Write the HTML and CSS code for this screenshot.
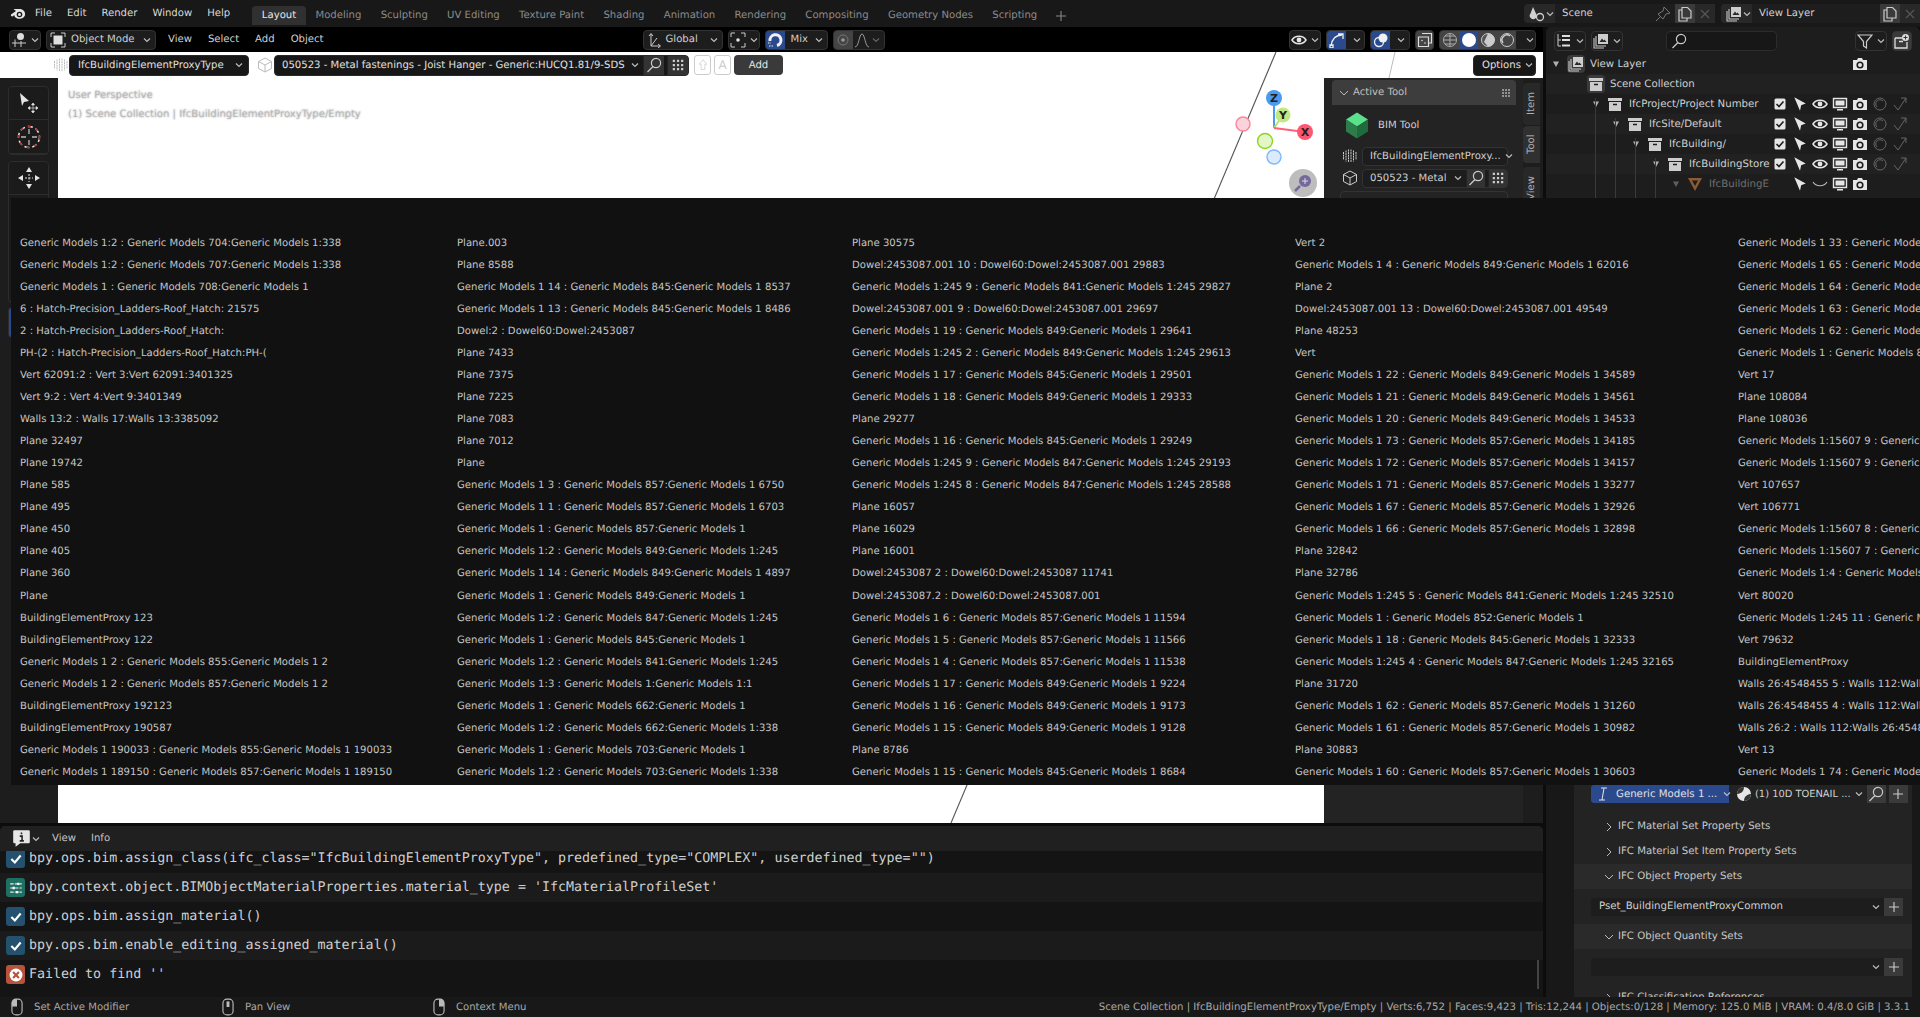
FILE: index.html
```html
<!DOCTYPE html>
<html lang="en">
  <head>
    <meta charset="UTF-8" />
    <title>Blender 3.3.1</title>
    <link rel="stylesheet" href="styles.css">
  </head>
  <body>
    <svg class="defs" width="0" height="0">
      <symbol id="chev" viewBox="0 0 10 10"><path d="M2 3.5 5 6.5 8 3.5" fill="none" stroke="currentColor" stroke-width="1.2"/></symbol>
      <symbol id="chev-r" viewBox="0 0 10 10"><path d="M3 1 7 5 3 9" fill="none" stroke="currentColor"/></symbol>
      <symbol id="chev-d" viewBox="0 0 10 10"><path d="M1 3 5 7 9 3" fill="none" stroke="currentColor"/></symbol>
      <symbol id="tri" viewBox="0 0 10 10"><path d="M2 2.5H8L5 8Z" fill="currentColor"/></symbol>
      <symbol id="search" viewBox="0 0 16 16"><circle cx="10" cy="6" r="4.6" fill="none" stroke="currentColor" stroke-width="1.2"/><path d="M7 9.5 1.5 15" stroke="currentColor" stroke-width="1.2"/></symbol>
      <symbol id="grid" viewBox="0 0 16 16"><path d="M2 2h2.5v2.500H2zM6.800 2h2.500v2.500H6.800zM11.500 2H14v2.500h-2.500zM2 6.800h2.500v2.500H2zM6.800 6.800h2.500v2.500H6.800zM11.500 6.800H14v2.500h-2.500zM2 11.500h2.500V14H2zM6.800 11.500h2.500V14H6.800zM11.500 11.500H14V14h-2.500z" fill="currentColor"/></symbol>
      <symbol id="plus" viewBox="0 0 12 12"><path d="M6 1V11M1 6H11" stroke="currentColor" stroke-width="1.1"/></symbol>
      <symbol id="box" viewBox="0 0 16 16"><path d="M1 2H15V5H1ZM2 6H14V15H2Z" fill="currentColor"/><path d="M6 8.500H10" stroke="#1d1d1d" stroke-width="1.500"/></symbol>
      <symbol id="check" viewBox="0 0 12 12"><rect width="11" height="11" x=".5" y=".5" rx="1.500" fill="#e6e6e6"/><path d="M2.500 6 5 8.500 9.500 3.500" fill="none" stroke="#222" stroke-width="1.700"/></symbol>
      <symbol id="arrow" viewBox="0 0 14 14"><path d="M2 1 12 6.500 8 8 7 13Z" fill="#e6e6e6"/></symbol>
      <symbol id="eye" viewBox="0 0 16 16"><path d="M1 8C4 3 12 3 15 8 12 13 4 13 1 8Z" fill="none" stroke="#e6e6e6" stroke-width="1.500"/><circle cx="8" cy="8" r="2.400" fill="#e6e6e6"/></symbol>
      <symbol id="eye-off" viewBox="0 0 16 16"><path d="M1 6C4 11 12 11 15 6" fill="none" stroke="#bbb" stroke-width="1.100"/></symbol>
      <symbol id="monitor" viewBox="0 0 16 16"><path d="M1.500 2.500H14.500V11.500H1.500Z" fill="none" stroke="#e6e6e6" stroke-width="1.400"/><path d="M3.500 4.500H12.500V9.500H3.500ZM5 13H11V14.500H5Z" fill="#e6e6e6"/></symbol>
      <symbol id="cam" viewBox="0 0 16 16"><path d="M1 4H5L6 2H10L11 4H15V14H1Z" fill="#e6e6e6"/><circle cx="8" cy="9" r="3.600" fill="#1d1d1d"/><circle cx="8" cy="9" r="2" fill="#e6e6e6"/></symbol>
      <symbol id="holdout" viewBox="0 0 16 16"><circle cx="8" cy="8" r="6" fill="none" stroke="#666"/><path d="M5 11A4 4 0 0 1 11 5" fill="none" stroke="#666"/></symbol>
      <symbol id="link" viewBox="0 0 16 16"><path d="M2 9 6 14 14 2M9 2H14V7" fill="none" stroke="#666"/></symbol>
      <symbol id="layer" viewBox="0 0 16 16"><path d="M1 5V15H11M3 3V13H13" fill="none" stroke="currentColor" stroke-width="1.100"/><path d="M5 1H15V11H5Z" fill="currentColor"/><path d="M6.500 9 9 5.500 10.500 7.500 11.500 6.500 13.500 9Z" fill="#282828"/></symbol>
      <symbol id="copy" viewBox="0 0 16 16"><path d="M5 1.500H10.500L14 5V12H5ZM5 4H2V15H10V12" fill="none" stroke="currentColor" stroke-width="1.200"/></symbol>
      <symbol id="close" viewBox="0 0 12 12"><path d="M2 2 10 10M10 2 2 10" stroke="currentColor" stroke-width="1.200"/></symbol>
      <symbol id="cube" viewBox="0 0 16 16"><path d="M8 1 14.500 4.500V11.500L8 15 1.500 11.500V4.500ZM1.500 4.500 8 8 14.500 4.500M8 8V15" fill="none" stroke="currentColor"/></symbol>
      <symbol id="ifc-type" viewBox="0 0 16 16"><path d="M1.500 4V12M4 2.500V13.500M6.500 1.500V14.500M9 1.500V14.500M11.500 2.500V13.500M14 4V12" stroke="currentColor" stroke-width="1" stroke-dasharray="2 .6"/></symbol>
      <symbol id="mouse-l" viewBox="0 0 12 16"><rect x="1.500" y="1" width="9" height="14" rx="3.500" fill="none" stroke="currentColor"/><path d="M1.500 7.500V4.500A3.500 3.500 0 0 1 6 1V7.500Z" fill="currentColor"/></symbol>
      <symbol id="mouse-m" viewBox="0 0 12 16"><rect x="1.500" y="1" width="9" height="14" rx="3.500" fill="none" stroke="currentColor"/><rect x="4.700" y="3" width="2.600" height="5" fill="currentColor"/></symbol>
      <symbol id="mouse-r" viewBox="0 0 12 16"><rect x="1.500" y="1" width="9" height="14" rx="3.500" fill="none" stroke="currentColor"/><path d="M10.500 7.500V4.500A3.500 3.500 0 0 0 6 1V7.500Z" fill="currentColor"/></symbol>
    </svg>

    <header class="topbar">
      <svg class="logo" viewBox="0 0 16 16"><path d="M1 9.500 6 6 3.500 4H9.500C13 4 15.500 6.500 15 10 14.500 13.500 8.500 15 5.500 12.500 4.500 11.500 4.300 10.800 4.300 10L2.500 11.500C1.500 11.500 .500 10.500 1 9.500Z" fill="#e6e6e6"/><circle cx="9.500" cy="9.500" r="2.800" fill="#181818"/><circle cx="9.500" cy="9.500" r="1.500" fill="#e6e6e6"/></svg>
      <nav class="menu">
        <span>File</span><span>Edit</span><span>Render</span><span>Window</span><span>Help</span>
      </nav>
      <nav class="tabs">
        <span class="tab active">Layout</span>
        <span class="tab">Modeling</span>
        <span class="tab">Sculpting</span>
        <span class="tab">UV Editing</span>
        <span class="tab">Texture Paint</span>
        <span class="tab">Shading</span>
        <span class="tab">Animation</span>
        <span class="tab">Rendering</span>
        <span class="tab">Compositing</span>
        <span class="tab">Geometry Nodes</span>
        <span class="tab">Scripting</span>
        <svg class="ic tab-plus"><use href="#plus"/></svg>
      </nav>
      <div class="scene-bar">
        <div class="picker scene">
          <span class="pick-icon">
            <svg class="ic" viewBox="0 0 16 16"><path d="M4 1 7 7.500A3.500 3.500 0 1 1 1.500 7.500Z" fill="#d0d0d0"/><circle cx="11" cy="11" r="3.500" fill="none" stroke="#d0d0d0" stroke-width="1.300"/></svg>
            <svg class="chev"><use href="#chev"/></svg>
          </span>
          <span class="pick-name">Scene</span>
          <svg class="ic pin" viewBox="0 0 16 16"><path d="M9 1 15 7 11 8 8 13 3 8 8 5ZM5 11 1 15" fill="none" stroke="#777"/></svg>
          <span class="pick-btn"><svg class="ic"><use href="#copy"/></svg></span>
          <span class="pick-btn dim"><svg class="ic-s"><use href="#close"/></svg></span>
        </div>
        <div class="picker layer">
          <span class="pick-icon">
            <svg class="ic"><use href="#layer"/></svg>
            <svg class="chev"><use href="#chev"/></svg>
          </span>
          <span class="pick-name">View Layer</span>
          <span class="pick-btn"><svg class="ic"><use href="#copy"/></svg></span>
          <span class="pick-btn dim"><svg class="ic-s"><use href="#close"/></svg></span>
        </div>
      </div>
    </header>

    <main class="workspace">
      <div class="left-col">
        <section class="viewport">
          <div class="vp-header">
            <div class="dd w-editor">
              <svg class="ic" viewBox="0 0 16 16"><path d="M1 11H15M4 7.500V15M10 9V15" stroke="#ccc"/><circle cx="9.500" cy="4.500" r="3.500" fill="#ddd"/></svg>
              <svg class="chev"><use href="#chev"/></svg>
            </div>
            <div class="dd w-mode">
              <svg class="ic" viewBox="0 0 16 16"><path d="M1 5V1H5M11 1H15V5M15 11V15H11M5 15H1V11" fill="none" stroke="#ccc"/><rect x="3.500" y="3.500" width="9" height="9" fill="#e0e0e0"/></svg>
              <span class="dd-text">Object Mode</span>
              <svg class="chev"><use href="#chev"/></svg>
            </div>
            <span class="vp-menu view">View</span>
            <span class="vp-menu">Select</span>
            <span class="vp-menu">Add</span>
            <span class="vp-menu">Object</span>

            <div class="vp-mid">
              <div class="dd w-global">
                <svg class="ic" viewBox="0 0 16 16"><path d="M4 14V2M2 4 4 1.500 6 4M4 14 13 14M11 12 13.500 14 11 16M4 14 10 6" fill="none" stroke="#ccc"/></svg>
                <span class="dd-text">Global</span>
                <svg class="chev"><use href="#chev"/></svg>
              </div>
              <div class="dd w-pivot">
                <svg class="ic" viewBox="0 0 16 16"><path d="M1 5V1H5M11 1H15V5M15 11V15H11M5 15H1V11" fill="none" stroke="#ccc"/><circle cx="8" cy="8" r="1.800" fill="#e6e6e6"/></svg>
                <svg class="chev"><use href="#chev"/></svg>
              </div>
              <div class="dd w-snap">
                <span class="snap-on"><svg class="ic" viewBox="0 0 16 16"><path d="M3 9A5.500 5.500 0 1 1 10 13.500" fill="none" stroke="#f0f0f0" stroke-width="3"/><path d="M1 11H4M2 14H6" stroke="#f0f0f0" stroke-dasharray="1.500 1"/></svg></span>
                <span class="dd-text">Mix</span>
                <svg class="chev"><use href="#chev"/></svg>
              </div>
              <div class="dd w-prop">
                <span class="prop-on"><svg class="ic-s" viewBox="0 0 12 12"><circle cx="6" cy="6" r="5" fill="none" stroke="#777"/><circle cx="6" cy="6" r="1.800" fill="#999"/></svg></span>
                <svg class="ic" viewBox="0 0 16 16"><path d="M1 15C5 15 5 2 8 2S11 15 15 15" fill="none" stroke="#999"/></svg>
                <svg class="chev dim"><use href="#chev"/></svg>
              </div>
            </div>

            <div class="vp-right">
              <div class="dd w-vis">
                <svg class="ic"><use href="#eye"/></svg>
                <svg class="chev"><use href="#chev"/></svg>
              </div>
              <div class="dd w-gizmo">
                <span class="snap-on"><svg class="ic" viewBox="0 0 16 16"><path d="M2 14C3 7 7 3 13 3M9 2H14V7M1 13H4V16H1Z" fill="none" stroke="#f0f0f0" stroke-width="1.300"/></svg></span>
                <svg class="chev mid-chev"><use href="#chev"/></svg>
              </div>
              <div class="dd w-over">
                <span class="snap-on"><svg class="ic" viewBox="0 0 16 16"><circle cx="6" cy="10" r="4.500" fill="none" stroke="#f0f0f0" stroke-width="1.300"/><circle cx="10" cy="6" r="4.500" fill="#f0f0f0"/></svg></span>
                <svg class="chev mid-chev"><use href="#chev"/></svg>
              </div>
              <div class="dd w-xray">
                <svg class="ic" viewBox="0 0 16 16"><path d="M5 1.500H14.500V11H11.500M1.500 5H11.500V14.500H1.500Z" fill="none" stroke="#ddd" stroke-width="1.200"/><circle cx="5" cy="8.500" r=".8" fill="#ddd"/><circle cx="8" cy="11" r=".8" fill="#ddd"/></svg>
              </div>
              <div class="dd w-shade">
                <span class="shade"><svg class="ic" viewBox="0 0 16 16"><circle cx="8" cy="8" r="6.500" fill="none" stroke="#aaa"/><path d="M1.500 8H14.500M8 1.500V14.500M3 4H13M3 12H13" stroke="#aaa"/></svg></span>
                <span class="shade on"><svg class="ic" viewBox="0 0 16 16"><circle cx="8" cy="8" r="7" fill="#fff"/></svg></span>
                <span class="shade"><svg class="ic" viewBox="0 0 16 16"><circle cx="8" cy="8" r="6.500" fill="#555" stroke="#ccc"/><path d="M8 1.500A6.500 6.500 0 0 1 8 14.500L4 10Z" fill="#ccc"/></svg></span>
                <span class="shade"><svg class="ic" viewBox="0 0 16 16"><circle cx="8" cy="8" r="6.500" fill="none" stroke="#ccc"/><path d="M4 11A5 5 0 0 1 11 4" fill="none" stroke="#ccc" stroke-width="1.500"/></svg></span>
                <svg class="chev shade-chev"><use href="#chev"/></svg>
              </div>
            </div>
          </div>

          <svg class="scene-lines" width="1543" height="796">
            <path d="M1276 25 951 796" stroke="#555" stroke-width="1.100"/>
            <path d="M1395 25 1389 51" stroke="#bbb"/>
            <path d="M1274 101V71" stroke="#4a9bf0" stroke-width="2"/>
            <path d="M1274 101 1283 88" stroke="#b8e070" stroke-width="2"/>
            <path d="M1274 101 1305 105" stroke="#ff5f78" stroke-width="2"/>
            <circle cx="1243" cy="97" r="7" fill="#fbd3db" stroke="#ff8299" stroke-width="1.400"/>
            <circle cx="1265" cy="114" r="7.500" fill="#e3f6c8" stroke="#8fd41e" stroke-width="1.400"/>
            <circle cx="1274" cy="130" r="7" fill="#dbeafd" stroke="#7db8f8" stroke-width="1.400"/>
            <circle cx="1274" cy="71" r="8" fill="#4a9bf0"/>
            <circle cx="1283" cy="88" r="7.500" fill="#c2e880"/>
            <circle cx="1305" cy="105" r="8" fill="#ff5570"/>
            <text x="1274" y="75" class="axis">Z</text>
            <text x="1283" y="92" class="axis">Y</text>
            <text x="1305" y="109" class="axis">X</text>
            <circle cx="1303" cy="156" r="14" fill="#bdbdbd"/>
            <circle cx="1305" cy="154" r="6" fill="#75699c"/>
            <path d="M1300 159 1295 164" stroke="#75699c" stroke-width="2.500"/>
            <path d="M1305 151V157M1302 154H1308" stroke="#ddd"/>
          </svg>

          <div class="tool-row">
            <svg class="ic tr-icon"><use href="#ifc-type"/></svg>
            <div class="dd dark w-class">
              <span class="dd-text">IfcBuildingElementProxyType</span>
              <svg class="chev"><use href="#chev"/></svg>
            </div>
            <svg class="ic tr-icon cube"><use href="#cube"/></svg>
            <div class="dd dark w-relating">
              <span class="dd-text">050523 - Metal fastenings - Joist Hanger - Generic:HUCQ1.81/9-SDS</span>
              <svg class="chev"><use href="#chev"/></svg>
              <span class="dd-btn"><svg class="ic"><use href="#search"/></svg></span>
              <span class="dd-btn"><svg class="ic-g"><use href="#grid"/></svg></span>
            </div>
            <span class="ghost"><svg class="ic-s" viewBox="0 0 12 16"><path d="M6 1 11 7H8.500V14H3.500V7H1Z" fill="none" stroke="#ccc"/></svg></span>
            <span class="ghost letter">A</span>
            <span class="add">Add</span>
            <div class="dd dark w-options">
              <span class="dd-text">Options</span>
              <svg class="chev"><use href="#chev"/></svg>
            </div>
          </div>

          <div class="vp-body">
            <aside class="toolbar">
              <div class="tool-group">
                <div class="tool">
                  <svg class="tool-ic" viewBox="0 0 24 24"><path d="M3 2 12 10 7 11 5 15Z" fill="#e6e6e6"/><path d="M16 12V22M11 17H21M16 12 14.500 14H17.500ZM16 22 14.500 20H17.500ZM11 17 13 15.500V18.500ZM21 17 19 15.500V18.500Z" fill="#e6e6e6" stroke="#e6e6e6" stroke-width=".6"/></svg>
                </div>
                <div class="tool">
                  <svg class="tool-ic" viewBox="0 0 24 24"><circle cx="12" cy="12" r="10.500" fill="none" stroke="#e6e6e6" stroke-width="1.500" stroke-dasharray="5 3"/><circle cx="12" cy="12" r="10.500" fill="none" stroke="#b03030" stroke-width="1.500" stroke-dasharray="3 5"/><path d="M12 4V9M12 15V20M4 12H9M15 12H20" stroke="#bbb" stroke-width="1.300"/></svg>
                </div>
              </div>
              <div class="tool-group">
                <div class="tool">
                  <svg class="tool-ic" viewBox="0 0 24 24"><path d="M12 1 15 6H9ZM12 23 9 18H15ZM1 12 6 9V15ZM23 12 18 15V9Z" fill="#e6e6e6"/><path d="M12 8V16M8 12H16" stroke="#e6e6e6" stroke-dasharray="2 1.500"/></svg>
                </div>
                <div class="tool tall"></div>
              </div>
              <div class="tool-group active-tool"></div>
            </aside>
            <div class="canvas">
              <p class="overlay-text">User Perspective</p>
              <p class="overlay-text">(1) Scene Collection | IfcBuildingElementProxyType/Empty</p>
            </div>
            <aside class="sidebar">
              <div class="side-panel">
                <div class="panel-head">
                  <svg class="chev"><use href="#chev-d"/></svg>
                  <span>Active Tool</span>
                  <svg class="ic-s handle"><use href="#grid"/></svg>
                </div>
                <div class="tool-name">
                  <svg class="bim-cube" viewBox="0 0 24 28"><path d="M12 1 23 8 12 15 1 8Z" fill="#5ae18c"/><path d="M1 8 12 15V27L1 20Z" fill="#2d7d4a"/><path d="M23 8 12 15V27L23 20Z" fill="#1f6b3c"/></svg>
                  <span>BIM Tool</span>
                </div>
                <div class="side-row">
                  <svg class="ic"><use href="#ifc-type"/></svg>
                  <div class="dd fill">
                    <span class="dd-text">IfcBuildingElementProxy...</span>
                    <svg class="chev"><use href="#chev"/></svg>
                  </div>
                </div>
                <div class="side-row">
                  <svg class="ic"><use href="#cube"/></svg>
                  <div class="dd fill">
                    <span class="dd-text">050523 - Metal</span>
                    <svg class="chev"><use href="#chev"/></svg>
                    <span class="dd-btn"><svg class="ic"><use href="#search"/></svg></span>
                    <span class="dd-btn"><svg class="ic-g"><use href="#grid"/></svg></span>
                  </div>
                </div>
                <div class="side-box"></div>
              </div>
              <div class="side-tabs">
                <span class="side-tab t-item">Item</span>
                <span class="side-tab t-tool">Tool</span>
                <span class="side-tab t-view">View</span>
              </div>
            </aside>
          </div>
        </section>

        <section class="info">
          <div class="info-head">
            <svg class="info-ic" viewBox="0 0 16 16"><path d="M2 1H14A1 1 0 0 1 15 2V11A1 1 0 0 1 14 12H7L3 15V12H2A1 1 0 0 1 1 11V2A1 1 0 0 1 2 1Z" fill="#e6e6e6"/><path d="M8 3V4.500M6.500 6H8.500V10M6.500 10H10" stroke="#222" stroke-width="1.300" fill="none"/></svg>
            <svg class="chev"><use href="#chev"/></svg>
            <span class="info-menu first">View</span>
            <span class="info-menu">Info</span>
          </div>
          <div class="log">
            <div class="log-row first-row"><span class="badge op"><svg viewBox="0 0 12 12"><path d="M2 6 5 9 10 3" fill="none" stroke="#fff" stroke-width="1.800"/></svg></span>bpy.ops.bim.assign_class(ifc_class="IfcBuildingElementProxyType", predefined_type="COMPLEX", userdefined_type="")</div>
            <div class="log-row alt"><span class="badge prop"><svg viewBox="0 0 12 12"><path d="M1 2.500H11M1 6H11M1 9.500H11" stroke="#e6e6e6" stroke-dasharray="3 1"/><path d="M7 1.500H9V3.500H7ZM3 5H5V7H3ZM6 8.500H8V10.500H6Z" fill="#fff"/></svg></span>bpy.context.object.BIMObjectMaterialProperties.material_type = 'IfcMaterialProfileSet'</div>
            <div class="log-row"><span class="badge op"><svg viewBox="0 0 12 12"><path d="M2 6 5 9 10 3" fill="none" stroke="#fff" stroke-width="1.800"/></svg></span>bpy.ops.bim.assign_material()</div>
            <div class="log-row alt"><span class="badge op"><svg viewBox="0 0 12 12"><path d="M2 6 5 9 10 3" fill="none" stroke="#fff" stroke-width="1.800"/></svg></span>bpy.ops.bim.enable_editing_assigned_material()</div>
            <div class="log-row"><span class="badge err"><svg viewBox="0 0 12 12"><circle cx="6" cy="6" r="5.500" fill="#fff"/><path d="M3.500 3.500 8.500 8.500M8.500 3.500 3.500 8.500" stroke="#b5533c" stroke-width="1.800"/></svg></span>Failed to find ''</div>
            <span class="log-scroll"></span>
          </div>
        </section>
      </div>

      <div class="right-col">
        <section class="outliner">
          <div class="out-head">
            <div class="dd w-display">
              <svg class="ic" viewBox="0 0 16 16"><path d="M2 1V13H5M2 7H5" fill="none" stroke="#ccc"/><path d="M6 2H14V4H6ZM6 6H14V8H6ZM6 11.500H14V13.500H6Z" fill="#ddd"/></svg>
              <svg class="chev"><use href="#chev"/></svg>
            </div>
            <div class="dd w-display">
              <svg class="ic"><use href="#layer"/></svg>
              <svg class="chev"><use href="#chev"/></svg>
            </div>
            <div class="out-search"><svg class="ic"><use href="#search"/></svg></div>
            <div class="dd w-display filter">
              <svg class="ic" viewBox="0 0 16 16"><path d="M1 2H15L9.500 8.500V15L6.500 13V8.500Z" fill="none" stroke="#ccc" stroke-width="1.200"/></svg>
              <svg class="chev"><use href="#chev"/></svg>
            </div>
            <div class="dd w-new">
              <svg class="ic" viewBox="0 0 16 16"><path d="M1 5H8M1 5V15H13V9M5 8.500H9" fill="none" stroke="#ddd" stroke-width="1.300"/><circle cx="11.500" cy="4.500" r="3.500" fill="#ddd"/><path d="M11.500 2.500V6.500M9.500 4.500H13.500" stroke="#333"/></svg>
            </div>
          </div>
          <div class="tree">
            <div class="tree-row">
              <svg class="tri"><use href="#tri"/></svg>
              <span class="tree-badge"><svg class="ic"><use href="#layer"/></svg></span>
              <span class="tree-name">View Layer</span>
              <div class="flags lone"><svg class="ic"><use href="#cam"/></svg></div>
            </div>
            <div class="tree-row alt i0">
              <span class="tree-badge"><svg class="ic"><use href="#box"/></svg></span>
              <span class="tree-name">Scene Collection</span>
            </div>
            <div class="tree-row i1">
              <svg class="tri"><use href="#tri"/></svg>
              <svg class="ic tree-ic"><use href="#box"/></svg>
              <span class="tree-name">IfcProject/Project Number</span>
              <div class="flags">
                <svg class="ic-s"><use href="#check"/></svg><svg class="ic"><use href="#arrow"/></svg><svg class="ic"><use href="#eye"/></svg><svg class="ic"><use href="#monitor"/></svg><svg class="ic"><use href="#cam"/></svg><svg class="ic"><use href="#holdout"/></svg><svg class="ic"><use href="#link"/></svg>
              </div>
            </div>
            <div class="tree-row alt i2">
              <svg class="tri"><use href="#tri"/></svg>
              <svg class="ic tree-ic"><use href="#box"/></svg>
              <span class="tree-name">IfcSite/Default</span>
              <div class="flags">
                <svg class="ic-s"><use href="#check"/></svg><svg class="ic"><use href="#arrow"/></svg><svg class="ic"><use href="#eye"/></svg><svg class="ic"><use href="#monitor"/></svg><svg class="ic"><use href="#cam"/></svg><svg class="ic"><use href="#holdout"/></svg><svg class="ic"><use href="#link"/></svg>
              </div>
            </div>
            <div class="tree-row i3">
              <svg class="tri"><use href="#tri"/></svg>
              <svg class="ic tree-ic"><use href="#box"/></svg>
              <span class="tree-name">IfcBuilding/</span>
              <div class="flags">
                <svg class="ic-s"><use href="#check"/></svg><svg class="ic"><use href="#arrow"/></svg><svg class="ic"><use href="#eye"/></svg><svg class="ic"><use href="#monitor"/></svg><svg class="ic"><use href="#cam"/></svg><svg class="ic"><use href="#holdout"/></svg><svg class="ic"><use href="#link"/></svg>
              </div>
            </div>
            <div class="tree-row alt i4">
              <svg class="tri"><use href="#tri"/></svg>
              <svg class="ic tree-ic"><use href="#box"/></svg>
              <span class="tree-name">IfcBuildingStore</span>
              <div class="flags">
                <svg class="ic-s"><use href="#check"/></svg><svg class="ic"><use href="#arrow"/></svg><svg class="ic"><use href="#eye"/></svg><svg class="ic"><use href="#monitor"/></svg><svg class="ic"><use href="#cam"/></svg><svg class="ic"><use href="#holdout"/></svg><svg class="ic"><use href="#link"/></svg>
              </div>
            </div>
            <div class="tree-row i5">
              <svg class="tri dim"><use href="#tri"/></svg>
              <svg class="ic tree-ic" viewBox="0 0 16 16"><path d="M1 2H15L8 15ZM5 4.500 8 10 11 4.500Z" fill="#8c5a34" fill-rule="evenodd"/></svg>
              <span class="tree-name dim">IfcBuildingE</span>
              <div class="flags part">
                <svg class="ic"><use href="#arrow"/></svg><svg class="ic"><use href="#eye-off"/></svg><svg class="ic"><use href="#monitor"/></svg><svg class="ic"><use href="#cam"/></svg>
              </div>
            </div>
            <span class="guide g1"></span><span class="guide g2"></span><span class="guide g3"></span><span class="guide g4"></span>
          </div>
        </section>

        <section class="props">
          <div class="props-tabs"></div>
          <div class="props-body">
            <div class="prop-row pick-row">
              <div class="mat-name">
                <svg class="ic" viewBox="0 0 16 16"><path d="M6 2H12M4 14H10M9 2 7 14" stroke="#e6e6e6" fill="none"/></svg>
                <span class="dd-text">Generic Models 1 ...</span>
                <svg class="chev"><use href="#chev"/></svg>
              </div>
              <svg class="ic sphere" viewBox="0 0 16 16"><circle cx="8" cy="8" r="7" fill="#e6e6e6"/><path d="M8 1A7 7 0 0 0 1 8C4 8 8 6 8 1ZM8 15A7 7 0 0 0 15 8C12 8 8 10 8 15Z" fill="#333"/></svg>
              <span class="dd-text toenail">(1) 10D TOENAIL ...</span>
              <svg class="chev"><use href="#chev"/></svg>
              <span class="square"><svg class="ic"><use href="#search"/></svg></span>
              <span class="square"><svg class="ic-s"><use href="#plus"/></svg></span>
            </div>
            <div class="sub closed"><svg class="chev"><use href="#chev-r"/></svg>IFC Material Set Property Sets</div>
            <div class="sub closed"><svg class="chev"><use href="#chev-r"/></svg>IFC Material Set Item Property Sets</div>
            <div class="sub open"><svg class="chev"><use href="#chev-d"/></svg>IFC Object Property Sets</div>
            <div class="prop-row field-row short">
              <div class="field"><span class="dd-text">Pset_BuildingElementProxyCommon</span><svg class="chev"><use href="#chev"/></svg></div>
              <span class="square"><svg class="ic-s"><use href="#plus"/></svg></span>
            </div>
            <div class="sub open"><svg class="chev"><use href="#chev-d"/></svg>IFC Object Quantity Sets</div>
            <div class="prop-row field-row">
              <div class="field"><span class="dd-text"></span><svg class="chev"><use href="#chev"/></svg></div>
              <span class="square"><svg class="ic-s"><use href="#plus"/></svg></span>
            </div>
            <div class="sub closed"><svg class="chev"><use href="#chev-r"/></svg>IFC Classification References</div>
          </div>
        </section>
      </div>
    </main>

    <footer class="statusbar">
      <span class="hint first"><svg class="mouse"><use href="#mouse-l"/></svg>Set Active Modifier</span>
      <span class="hint second"><svg class="mouse"><use href="#mouse-m"/></svg>Pan View</span>
      <span class="hint"><svg class="mouse"><use href="#mouse-r"/></svg>Context Menu</span>
      <span class="stats">Scene Collection | IfcBuildingElementProxyType/Empty | Verts:6,752 | Faces:9,423 | Tris:12,244 | Objects:0/128 | Memory: 125.0 MiB | VRAM: 0.4/8.0 GiB | 3.3.1</span>
    </footer>

    <div class="popup">
      <div class="popup-col c1">
        <p>Generic Models 1:2 : Generic Models 704:Generic Models 1:338</p>
        <p>Generic Models 1:2 : Generic Models 707:Generic Models 1:338</p>
        <p>Generic Models 1 : Generic Models 708:Generic Models 1</p>
        <p>6 : Hatch-Precision_Ladders-Roof_Hatch: 21575</p>
        <p>2 : Hatch-Precision_Ladders-Roof_Hatch:</p>
        <p>PH-(2 : Hatch-Precision_Ladders-Roof_Hatch:PH-(</p>
        <p>Vert 62091:2 : Vert 3:Vert 62091:3401325</p>
        <p>Vert 9:2 : Vert 4:Vert 9:3401349</p>
        <p>Walls 13:2 : Walls 17:Walls 13:3385092</p>
        <p>Plane 32497</p>
        <p>Plane 19742</p>
        <p>Plane 585</p>
        <p>Plane 495</p>
        <p>Plane 450</p>
        <p>Plane 405</p>
        <p>Plane 360</p>
        <p>Plane</p>
        <p>BuildingElementProxy 123</p>
        <p>BuildingElementProxy 122</p>
        <p>Generic Models 1 2 : Generic Models 855:Generic Models 1 2</p>
        <p>Generic Models 1 2 : Generic Models 857:Generic Models 1 2</p>
        <p>BuildingElementProxy 192123</p>
        <p>BuildingElementProxy 190587</p>
        <p>Generic Models 1 190033 : Generic Models 855:Generic Models 1 190033</p>
        <p>Generic Models 1 189150 : Generic Models 857:Generic Models 1 189150</p>
      </div>
      <div class="popup-col c2">
        <p>Plane.003</p>
        <p>Plane 8588</p>
        <p>Generic Models 1 14 : Generic Models 845:Generic Models 1 8537</p>
        <p>Generic Models 1 13 : Generic Models 845:Generic Models 1 8486</p>
        <p>Dowel:2 : Dowel60:Dowel:2453087</p>
        <p>Plane 7433</p>
        <p>Plane 7375</p>
        <p>Plane 7225</p>
        <p>Plane 7083</p>
        <p>Plane 7012</p>
        <p>Plane</p>
        <p>Generic Models 1 3 : Generic Models 857:Generic Models 1 6750</p>
        <p>Generic Models 1 1 : Generic Models 857:Generic Models 1 6703</p>
        <p>Generic Models 1 : Generic Models 857:Generic Models 1</p>
        <p>Generic Models 1:2 : Generic Models 849:Generic Models 1:245</p>
        <p>Generic Models 1 14 : Generic Models 849:Generic Models 1 4897</p>
        <p>Generic Models 1 : Generic Models 849:Generic Models 1</p>
        <p>Generic Models 1:2 : Generic Models 847:Generic Models 1:245</p>
        <p>Generic Models 1 : Generic Models 845:Generic Models 1</p>
        <p>Generic Models 1:2 : Generic Models 841:Generic Models 1:245</p>
        <p>Generic Models 1:3 : Generic Models 1:Generic Models 1:1</p>
        <p>Generic Models 1 : Generic Models 662:Generic Models 1</p>
        <p>Generic Models 1:2 : Generic Models 662:Generic Models 1:338</p>
        <p>Generic Models 1 : Generic Models 703:Generic Models 1</p>
        <p>Generic Models 1:2 : Generic Models 703:Generic Models 1:338</p>
      </div>
      <div class="popup-col c3">
        <p>Plane 30575</p>
        <p>Dowel:2453087.001 10 : Dowel60:Dowel:2453087.001 29883</p>
        <p>Generic Models 1:245 9 : Generic Models 841:Generic Models 1:245 29827</p>
        <p>Dowel:2453087.001 9 : Dowel60:Dowel:2453087.001 29697</p>
        <p>Generic Models 1 19 : Generic Models 849:Generic Models 1 29641</p>
        <p>Generic Models 1:245 2 : Generic Models 849:Generic Models 1:245 29613</p>
        <p>Generic Models 1 17 : Generic Models 845:Generic Models 1 29501</p>
        <p>Generic Models 1 18 : Generic Models 849:Generic Models 1 29333</p>
        <p>Plane 29277</p>
        <p>Generic Models 1 16 : Generic Models 845:Generic Models 1 29249</p>
        <p>Generic Models 1:245 9 : Generic Models 847:Generic Models 1:245 29193</p>
        <p>Generic Models 1:245 8 : Generic Models 847:Generic Models 1:245 28588</p>
        <p>Plane 16057</p>
        <p>Plane 16029</p>
        <p>Plane 16001</p>
        <p>Dowel:2453087 2 : Dowel60:Dowel:2453087 11741</p>
        <p>Dowel:2453087.2 : Dowel60:Dowel:2453087.001</p>
        <p>Generic Models 1 6 : Generic Models 857:Generic Models 1 11594</p>
        <p>Generic Models 1 5 : Generic Models 857:Generic Models 1 11566</p>
        <p>Generic Models 1 4 : Generic Models 857:Generic Models 1 11538</p>
        <p>Generic Models 1 17 : Generic Models 849:Generic Models 1 9224</p>
        <p>Generic Models 1 16 : Generic Models 849:Generic Models 1 9173</p>
        <p>Generic Models 1 15 : Generic Models 849:Generic Models 1 9128</p>
        <p>Plane 8786</p>
        <p>Generic Models 1 15 : Generic Models 845:Generic Models 1 8684</p>
      </div>
      <div class="popup-col c4">
        <p>Vert 2</p>
        <p>Generic Models 1 4 : Generic Models 849:Generic Models 1 62016</p>
        <p>Plane 2</p>
        <p>Dowel:2453087.001 13 : Dowel60:Dowel:2453087.001 49549</p>
        <p>Plane 48253</p>
        <p>Vert</p>
        <p>Generic Models 1 22 : Generic Models 849:Generic Models 1 34589</p>
        <p>Generic Models 1 21 : Generic Models 849:Generic Models 1 34561</p>
        <p>Generic Models 1 20 : Generic Models 849:Generic Models 1 34533</p>
        <p>Generic Models 1 73 : Generic Models 857:Generic Models 1 34185</p>
        <p>Generic Models 1 72 : Generic Models 857:Generic Models 1 34157</p>
        <p>Generic Models 1 71 : Generic Models 857:Generic Models 1 33277</p>
        <p>Generic Models 1 67 : Generic Models 857:Generic Models 1 32926</p>
        <p>Generic Models 1 66 : Generic Models 857:Generic Models 1 32898</p>
        <p>Plane 32842</p>
        <p>Plane 32786</p>
        <p>Generic Models 1:245 5 : Generic Models 841:Generic Models 1:245 32510</p>
        <p>Generic Models 1 : Generic Models 852:Generic Models 1</p>
        <p>Generic Models 1 18 : Generic Models 845:Generic Models 1 32333</p>
        <p>Generic Models 1:245 4 : Generic Models 847:Generic Models 1:245 32165</p>
        <p>Plane 31720</p>
        <p>Generic Models 1 62 : Generic Models 857:Generic Models 1 31260</p>
        <p>Generic Models 1 61 : Generic Models 857:Generic Models 1 30982</p>
        <p>Plane 30883</p>
        <p>Generic Models 1 60 : Generic Models 857:Generic Models 1 30603</p>
      </div>
      <div class="popup-col c5">
        <p>Generic Models 1 33 : Generic Models</p>
        <p>Generic Models 1 65 : Generic Models</p>
        <p>Generic Models 1 64 : Generic Models</p>
        <p>Generic Models 1 63 : Generic Models</p>
        <p>Generic Models 1 62 : Generic Models</p>
        <p>Generic Models 1 : Generic Models 8</p>
        <p>Vert 17</p>
        <p>Plane 108084</p>
        <p>Plane 108036</p>
        <p>Generic Models 1:15607 9 : Generic Models</p>
        <p>Generic Models 1:15607 9 : Generic Models</p>
        <p>Vert 107657</p>
        <p>Vert 106771</p>
        <p>Generic Models 1:15607 8 : Generic Models</p>
        <p>Generic Models 1:15607 7 : Generic Models</p>
        <p>Generic Models 1:4 : Generic Models</p>
        <p>Vert 80020</p>
        <p>Generic Models 1:245 11 : Generic Models</p>
        <p>Vert 79632</p>
        <p>BuildingElementProxy</p>
        <p>Walls 26:4548455 5 : Walls 112:Walls</p>
        <p>Walls 26:4548455 4 : Walls 112:Walls</p>
        <p>Walls 26:2 : Walls 112:Walls 26:4548</p>
        <p>Vert 13</p>
        <p>Generic Models 1 74 : Generic Models</p>
      </div>
    </div>
  </body>
</html>
```

FILE: styles.css
```css
html {
  box-sizing: border-box;
}

*,
*:before,
*:after {
  box-sizing: inherit;
}

body,
p {
  margin: 0;
  padding: 0;
}

body {
  position: relative;
  width: 1920px;
  height: 1017px;
  overflow: hidden;
  display: flex;
  flex-direction: column;
  background: #0c0c0c;
  color: #d0d0d0;
  font-family: "DejaVu Sans", sans-serif;
  font-size: 10.1px;
  text-rendering: geometricPrecision;
}

.defs {
  position: absolute;
}

.ic {
  width: 16px;
  height: 16px;
  flex: none;
  color: #ccc;
}

.ic-s {
  width: 12px;
  height: 12px;
  flex: none;
  color: #ccc;
}

.ic-g {
  width: 14px;
  height: 14px;
  flex: none;
  color: #ccc;
}

.chev {
  width: 10px;
  height: 10px;
  flex: none;
  color: #bbb;
}

.dim {
  opacity: 0.45;
}

/* top bar */
.topbar {
  height: 27px;
  flex: none;
  display: flex;
  align-items: flex-start;
  background: #181818;
}

.logo {
  width: 16px;
  height: 16px;
  margin: 5px 0 0 10px;
}

.menu {
  display: flex;
  height: 26px;
  align-items: center;
  margin-left: 9px;
  gap: 15px;
  color: #d8d8d8;
}

.tabs {
  display: flex;
  height: 19px;
  margin: 6px 0 0 22px;
  align-items: center;
  color: #8c8c8c;
}

.tab {
  height: 19px;
  line-height: 19px;
  padding: 0 9.65px;
}

.tab.active {
  background: #303030;
  color: #e6e6e6;
  border-radius: 4px 4px 0 0;
}

.tab-plus {
  margin-left: 8px;
  width: 12px;
  height: 12px;
  color: #888;
}

.scene-bar {
  margin: 4px 0 0 auto;
  display: flex;
  gap: 6px;
}

.picker {
  height: 19px;
  display: flex;
  align-items: center;
  background: #1d1d1d;
  border-radius: 4px;
}

.picker.scene {
  width: 191px;
}

.picker.layer {
  width: 199px;
}

.pick-icon {
  width: 31px;
  height: 19px;
  display: flex;
  align-items: center;
  justify-content: flex-end;
  background: #282828;
  border-radius: 4px 0 0 4px;
}

.pick-name {
  flex: 1;
  padding-left: 7px;
}

.pin {
  margin-right: 4px;
}

.pick-btn {
  width: 20px;
  height: 19px;
  display: flex;
  align-items: center;
  justify-content: center;
  background: #3a3a3a;
}

.pick-btn.dim {
  background: #282828;
  opacity: 1;
  color: #555;
}

.pick-btn.dim svg {
  color: #555;
}

/* workspace */
.workspace {
  flex: 1;
  min-height: 0;
  display: flex;
  gap: 3px;
}

.left-col {
  width: 1543px;
  display: flex;
  flex-direction: column;
  gap: 3px;
}

.right-col {
  flex: 1;
  min-width: 0;
  display: flex;
  flex-direction: column;
}

/* 3d viewport */
.viewport {
  position: relative;
  height: 796px;
  flex: none;
  display: flex;
  flex-direction: column;
  background: #fff;
}

.vp-header {
  height: 25px;
  flex: none;
  display: flex;
  align-items: center;
  padding-left: 9px;
  background: #000;
}

.dd {
  height: 20px;
  display: flex;
  align-items: center;
  background: #1d1d1d;
  border: 1px solid #333;
  border-radius: 4px;
  padding: 0 3px;
  gap: 3px;
  color: #d0d0d0;
}

.dd.dark {
  height: 21px;
  background: #171717;
  border: 1px solid #2a2a2a;
}

.dd-text {
  flex: 1;
  white-space: nowrap;
}

.dd-btn {
  width: 21px;
  height: 100%;
  display: flex;
  align-items: center;
  justify-content: center;
  background: #333;
  border-left: 1px solid #222;
  flex: none;
}

.w-editor { width: 32px; margin-right: 5px; padding: 0 1px; }
.w-mode { width: 110px; gap: 5px; padding: 0 3px; }

.vp-menu {
  margin-left: 16px;
  color: #d0d0d0;
}

.vp-menu.view {
  margin-left: 12px;
}

.vp-mid {
  display: flex;
  gap: 5px;
  margin-left: 319px;
}

.w-global { width: 80px; gap: 3px; padding: 0 3px; }
.w-pivot { width: 32px; padding: 0 1px; }
.w-snap { width: 63px; padding: 0 3px 0 0; gap: 6px; }
.w-prop { width: 52px; padding: 0 1px 0 0; gap: 1px; overflow: hidden; }

.snap-on {
  width: 19px;
  height: 100%;
  display: flex;
  align-items: center;
  justify-content: center;
  background: #2b4a8e;
  border-radius: 3px 0 0 3px;
  flex: none;
}

.prop-on {
  width: 19px;
  height: 100%;
  display: flex;
  align-items: center;
  justify-content: center;
  background: #444;
  flex: none;
}

.vp-right {
  margin-left: auto;
  margin-right: 7px;
  display: flex;
  gap: 5px;
}

.w-vis { width: 32px; padding: 0 1px; }
.w-gizmo { width: 39px; padding: 0 3px 0 0; gap: 6px; overflow: hidden; }
.w-over { width: 40px; padding: 0 3px 0 0; gap: 6px; overflow: hidden; }
.w-xray { width: 19px; padding: 0; justify-content: center; background: #444; }
.w-shade { width: 97px; padding: 0; gap: 0; overflow: hidden; }

.shade {
  width: 19px;
  height: 100%;
  display: flex;
  align-items: center;
  justify-content: center;
  background: #444;
  flex: none;
}

.shade.on {
  background: #2b4a8e;
}

.shade-chev {
  margin-left: 9px;
}

.scene-lines {
  position: absolute;
  left: 0;
  top: 0;
  pointer-events: none;
}

.axis {
  font-size: 11px;
  font-weight: bold;
  text-anchor: middle;
  fill: #222;
}

.tool-row {
  position: relative;
  height: 26px;
  flex: none;
  display: flex;
  align-items: center;
  padding-left: 53px;
}

.tr-icon {
  color: #bbb;
}

.tr-icon.cube {
  margin: 0 1px 0 8px;
}

.tool-row .dd {
  color: #e0e0e0;
}

.w-class {
  width: 180px;
  margin-left: 0;
  padding: 0 4px 0 8px;
}

.w-relating {
  width: 415px;
  padding: 0 0 0 7px;
}

.w-options {
  width: 63px;
  margin-left: auto;
  margin-right: 7px;
  padding: 0 3px 0 8px;
}

.ghost {
  width: 17px;
  height: 20px;
  margin-left: 5px;
  display: flex;
  align-items: center;
  justify-content: center;
  border: 1px solid #ccc;
  border-radius: 3px;
  color: #ccc;
  font-size: 12px;
}

.ghost.letter {
  margin-left: 3px;
}

.add {
  width: 49px;
  height: 20px;
  margin-left: 3px;
  display: flex;
  align-items: center;
  justify-content: center;
  background: #3a3a3a;
  border-radius: 4px;
  color: #e6e6e6;
}

.vp-body {
  flex: 1;
  min-height: 0;
  display: flex;
}

.toolbar {
  position: relative;
  width: 58px;
  flex: none;
  background: #1d1d1d;
  padding: 8px 9px 0 8px;
  display: flex;
  flex-direction: column;
  gap: 6px;
}

.tool-group {
  border: 1px solid #2c2c2c;
  border-radius: 4px;
  background: #1b1b1b;
}

.tool {
  height: 33px;
  display: flex;
  align-items: center;
  justify-content: center;
  border-bottom: 1px solid #2c2c2c;
}

.tool + .tool {
  height: 34px;
}

.tool.tall {
  height: 107px;
}

.active-tool {
  height: 31px;
  margin-top: -2px;
  background: #2b4a8e;
}

.tool-ic {
  width: 24px;
  height: 24px;
}

.canvas {
  flex: 1;
  padding: 8px 0 0 10px;
  position: relative;
}

.overlay-text {
  height: 19px;
  line-height: 19px;
  color: rgba(170, 170, 170, 0.6);
  text-shadow: 0 0 2px rgba(150, 150, 150, 0.9);
}

.sidebar {
  position: relative;
  width: 219px;
  flex: none;
  display: flex;
  background: #1d1d1d;
}

.side-panel {
  width: 199px;
  background: #232323;
  padding: 2px 7px 0 8px;
  flex: none;
}

.panel-head {
  height: 25px;
  display: flex;
  align-items: center;
  gap: 4px;
  padding-left: 7px;
  background: #3d3d3d;
  border-radius: 4px 4px 0 0;
  color: #c0c0c0;
}

.handle {
  margin-left: auto;
  margin-right: 5px;
  width: 10px;
  height: 10px;
}

.tool-name {
  height: 40px;
  display: flex;
  align-items: center;
  gap: 9px;
  padding-left: 13px;
}

.bim-cube {
  width: 24px;
  height: 29px;
}

.side-row {
  height: 22px;
  display: flex;
  align-items: center;
  gap: 4px;
  padding-left: 10px;
  margin-right: 8px;
}

.dd.fill {
  flex: 1;
  height: 19px;
  padding: 0 0 0 7px;
  min-width: 0;
}

.dd.fill .dd-btn {
  width: 19px;
}

.side-box {
  height: 40px;
  margin: 2px 8px 0 8px;
  border: 1px solid #333;
  border-radius: 4px;
}

.side-tabs {
  flex: 1;
  padding-top: 5px;
}

.side-tab {
  display: block;
  width: 17px;
  writing-mode: vertical-rl;
  transform: rotate(180deg);
  text-align: center;
  line-height: 17px;
  background: #282828;
  border-radius: 0 4px 4px 0;
  margin-bottom: 1px;
  color: #b0b0b0;
}

.t-item { height: 42px; }
.t-tool { height: 37px; background: #303030; }
.t-view { height: 42px; margin-top: 4px; }

/* info editor */
.info {
  height: 171px;
  flex: none;
  display: flex;
  flex-direction: column;
  background: #141414;
  border-radius: 5px 5px 0 0;
  overflow: hidden;
}

.info-head {
  height: 25px;
  flex: none;
  display: flex;
  align-items: center;
  padding-left: 12px;
  background: #202020;
}

.info-ic {
  width: 19px;
  height: 19px;
}

.info-menu {
  margin-left: 15px;
  color: #c4c4c4;
}

.info-menu.first {
  margin-left: 11px;
}

.log {
  flex: 1;
  min-height: 0;
  overflow: hidden;
  position: relative;
  font-family: "DejaVu Sans Mono", monospace;
  font-size: 13.32px;
  color: #cfcfcf;
}

.log-row {
  height: 29px;
  display: flex;
  align-items: center;
  gap: 4px;
  padding-left: 6px;
  white-space: pre;
}

.log-row.alt {
  background: #1b1b1b;
}

.first-row {
  margin-top: -7px;
}

.badge {
  width: 19px;
  height: 19px;
  flex: none;
  border-radius: 3px;
  display: flex;
  align-items: center;
  justify-content: center;
}

.badge svg {
  width: 14px;
  height: 14px;
}

.badge.op { background: #24526e; }
.badge.prop { background: #1f6f62; }
.badge.err { background: #b5533c; }

.log-scroll {
  position: absolute;
  right: 4px;
  top: 109px;
  width: 2px;
  height: 29px;
  background: #444;
}

/* outliner */
.outliner {
  height: 753px;
  flex: none;
  background: #1d1d1d;
  border-radius: 5px 5px 0 0;
}

.out-head {
  height: 25px;
  display: flex;
  align-items: center;
  padding: 2px 8px 0 8px;
  gap: 5px;
}

.w-display { width: 32px; padding: 0 1px; }
.out-search {
  width: 111px;
  height: 20px;
  margin-left: 38px;
  display: flex;
  align-items: center;
  padding-left: 4px;
  background: #171717;
  border: 1px solid #2c2c2c;
  border-radius: 4px;
}

.filter { margin-left: auto; }
.w-new { width: 20px; padding: 0 1px; background: #3a3a3a; }

.tree {
  position: relative;
  padding-top: 2px;
  font-size: 10.2px;
}

.tree-row {
  position: relative;
  height: 20px;
  display: flex;
  align-items: center;
  padding-left: 5px;
  white-space: nowrap;
}

.tree-row.alt {
  background: #212121;
}

.tri {
  width: 10px;
  height: 10px;
  margin-right: 6px;
  color: #b0b0b0;
}

.tree-ic {
  margin-right: 6px;
}

.tree-badge {
  width: 18px;
  height: 18px;
  margin-right: 5px;
  display: flex;
  align-items: center;
  justify-content: center;
  background: #3a3a3a;
  border-radius: 4px;
}

.i0 { padding-left: 41px; }
.i1 { padding-left: 45px; }
.i2 { padding-left: 65px; }
.i3 { padding-left: 85px; }
.i4 { padding-left: 105px; }
.i5 { padding-left: 125px; }

.tree-name {
  width: 196px;
  overflow: hidden;
}

.i1 .tree-name { width: 150px; }
.i2 .tree-name { width: 130px; }
.i3 .tree-name { width: 110px; }
.i4 .tree-name { width: 91px; }
.i5 .tree-name { width: 60px; }

.flags {
  position: absolute;
  left: 224px;
  display: grid;
  grid-auto-flow: column;
  grid-auto-columns: 20px;
  align-items: center;
  justify-items: center;
}

.flags.lone {
  left: 304px;
}

.flags.part {
  left: 244px;
}

/* properties */
.props {
  flex: 1;
  min-height: 0;
  display: flex;
  background: #181818;
  overflow: hidden;
}

.props-tabs {
  width: 28px;
  flex: none;
}

.props-body {
  width: 338px;
  flex: none;
  padding-top: 5px;
  background: #232323;
  font-size: 10.2px;
}

.prop-row {
  display: flex;
  align-items: center;
  padding: 0 9px 0 17px;
}

.pick-row {
  height: 18px;
  margin-bottom: 11px;
  gap: 3px;
}

.mat-name {
  width: 138px;
  height: 18px;
  display: flex;
  align-items: center;
  gap: 5px;
  padding: 0 4px;
  background: #2b4a8e;
  border-radius: 3px 0 0 3px;
  color: #e0e0e0;
}

.sphere {
  margin-left: 4px;
}

.toenail {
  font-size: 9.9px;
}

.square {
  width: 19px;
  height: 18px;
  display: flex;
  align-items: center;
  justify-content: center;
  background: #3a3a3a;
  flex: none;
}

.sub {
  height: 25px;
  display: flex;
  align-items: center;
  gap: 4px;
  padding-left: 30px;
  color: #c8c8c8;
  white-space: nowrap;
}

.sub.open {
  background: #2a2a2a;
}

.field-row {
  height: 36px;
}

.field-row.short {
  height: 35px;
}

.field {
  flex: 1;
  height: 18px;
  display: flex;
  align-items: center;
  padding: 0 3px 0 8px;
  background: #1d1d1d;
  border-radius: 3px 0 0 3px;
}

/* status bar */
.statusbar {
  height: 20px;
  flex: none;
  display: flex;
  align-items: center;
  padding: 0 10px 0 10px;
  background: #181818;
  color: #a8a8a8;
  white-space: nowrap;
}

.hint {
  display: flex;
  align-items: center;
  gap: 10px;
}

.hint.first { width: 211px; }
.hint.second { width: 211px; }

.mouse {
  width: 14px;
  height: 18px;
  color: #bbb;
}

.stats {
  margin-left: auto;
  font-size: 10.2px;
}

/* search popup */
.popup {
  position: absolute;
  left: 11px;
  top: 198px;
  right: 0;
  height: 587px;
  padding: 35px 0 0 9px;
  display: grid;
  grid-template-columns: 437px 395px 443px 443px 1fr;
  background: #111;
  overflow: hidden;
  white-space: nowrap;
  color: #c6c6c6;
}

.popup p {
  height: 22.04px;
  line-height: 22.04px;
}

.popup-col {
  overflow: hidden;
}

.guide {
  position: absolute;
  top: 46px;
  width: 1px;
  height: 120px;
  background: #3a3a3a;
}

.g1 { left: 49px; }
.g2 { left: 69px; top: 66px; height: 100px; }
.g3 { left: 89px; top: 86px; height: 80px; }
.g4 { left: 109px; top: 106px; height: 60px; }
```
